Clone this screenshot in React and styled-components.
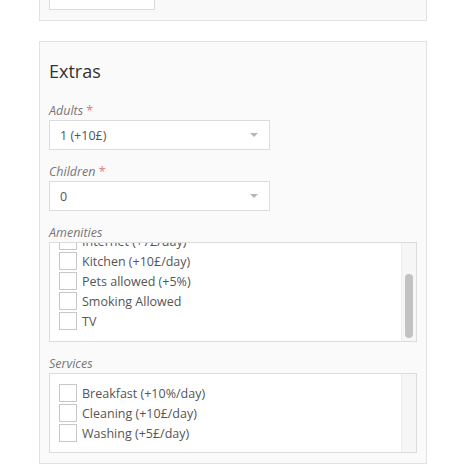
import React, { useLayoutEffect, useRef } from 'react';
import styled, { createGlobalStyle } from 'styled-components';

const amenities = [
  'Air conditioning (+5£/day)',
  'Internet (+7£/day)',
  'Kitchen (+10£/day)',
  'Pets allowed (+5%)',
  'Smoking Allowed',
  'TV',
];

const services = ['Breakfast (+10%/day)', 'Cleaning (+10£/day)', 'Washing (+5£/day)'];

const CheckList = ({ items, height, scrollToEnd }) => {
  const ref = useRef(null);

  useLayoutEffect(() => {
    if (scrollToEnd && ref.current) ref.current.scrollTop = ref.current.scrollHeight;
  }, [scrollToEnd]);

  return (
    <ListBox $height={height}>
      <ListView ref={ref}>
        <ListInner>
          {items.map((item) => (
            <Option key={item}>
              <Check type="checkbox" />
              {item}
            </Option>
          ))}
        </ListInner>
      </ListView>
      <Track>{scrollToEnd && <Thumb />}</Track>
    </ListBox>
  );
};

const Dropdown = ({ value }) => (
  <Select>
    <span>{value}</span>
    <Arrow />
  </Select>
);

const App = () => {
  return (
    <>
      <GlobalStyle />
      <Page>
        <TopPanel>
          <TopInput />
        </TopPanel>
        <Panel>
          <Heading>Extras</Heading>
          <Field>
            <Label>
              Adults <Required>*</Required>
            </Label>
            <Dropdown value="1 (+10£)" />
          </Field>
          <Field>
            <Label>
              Children <Required>*</Required>
            </Label>
            <Dropdown value="0" />
          </Field>
          <Field>
            <Label>Amenities</Label>
            <CheckList items={amenities} height={100} scrollToEnd />
          </Field>
          <Field>
            <Label>Services</Label>
            <CheckList items={services} height={80} />
          </Field>
        </Panel>
      </Page>
    </>
  );
};

export default App;

const GlobalStyle = createGlobalStyle`
  body {
    margin: 0;
    background: #fff;
    font-family: 'Open Sans', 'Liberation Sans', sans-serif;
    overflow: hidden;
  }
`;

const Page = styled.div`
  width: 388px;
  margin-top: -31px;
  padding-left: 39px;
`;

const TopPanel = styled.div`
  padding: 10px 9px;
  border: 1px solid #e2e2e2;
  background: #f9f9f9;
`;

const TopInput = styled.div`
  box-sizing: border-box;
  width: 106px;
  height: 30px;
  border: 1px solid #dcdcdc;
  background: #fff;
`;

const Panel = styled.div`
  margin-top: 20px;
  padding: 17px 9px 10px;
  border: 1px solid #e2e2e2;
  background: #fafafa;
`;

const Heading = styled.h3`
  margin: 0 0 17px;
  font-size: 18px;
  line-height: 24px;
  font-weight: 400;
  color: #333;
`;

const Field = styled.div`
  margin-bottom: 11px;

  &:last-child {
    margin-bottom: 0;
  }
`;

const Label = styled.label`
  display: block;
  padding-top: 2px;
  font-size: 12.5px;
  line-height: 18px;
  font-style: italic;
  color: #777;
`;

const Required = styled.span`
  color: #e27a7a;
  font-style: normal;
`;

const Select = styled.div`
  box-sizing: border-box;
  display: flex;
  align-items: center;
  justify-content: space-between;
  width: 221px;
  height: 30px;
  padding: 0 11px 0 10px;
  border: 1px solid #dcdcdc;
  background: #fff;
  font-size: 12.5px;
  color: #555;
`;

const Arrow = styled.span`
  width: 0;
  height: 0;
  border-left: 4px solid transparent;
  border-right: 4px solid transparent;
  border-top: 4px solid #b5b5b5;
`;

const ListBox = styled.div`
  box-sizing: border-box;
  display: flex;
  height: ${({ $height }) => $height}px;
  border: 1px solid #dcdcdc;
  background: #fff;
`;

const ListView = styled.div`
  flex: 1;
  overflow: hidden;
`;

const ListInner = styled.div`
  padding: 9px 9px 10px;
`;

const Track = styled.div`
  display: flex;
  flex-direction: column;
  flex: none;
  width: 14px;
  border-left: 1px solid #ededed;
  background: #f6f6f6;
`;

const Thumb = styled.div`
  height: 64px;
  margin: auto 3px 3px 3px;
  border-radius: 4px;
  background: #c2c2c2;
`;

const Option = styled.label`
  display: flex;
  align-items: center;
  gap: 5px;
  height: 20px;
  font-size: 12.5px;
  color: #555;
  white-space: nowrap;
`;

const Check = styled.input`
  appearance: none;
  flex: none;
  box-sizing: border-box;
  width: 18px;
  height: 18px;
  margin: 0;
  border: 1px solid #c8c8c8;
  background: #fff;
`;
